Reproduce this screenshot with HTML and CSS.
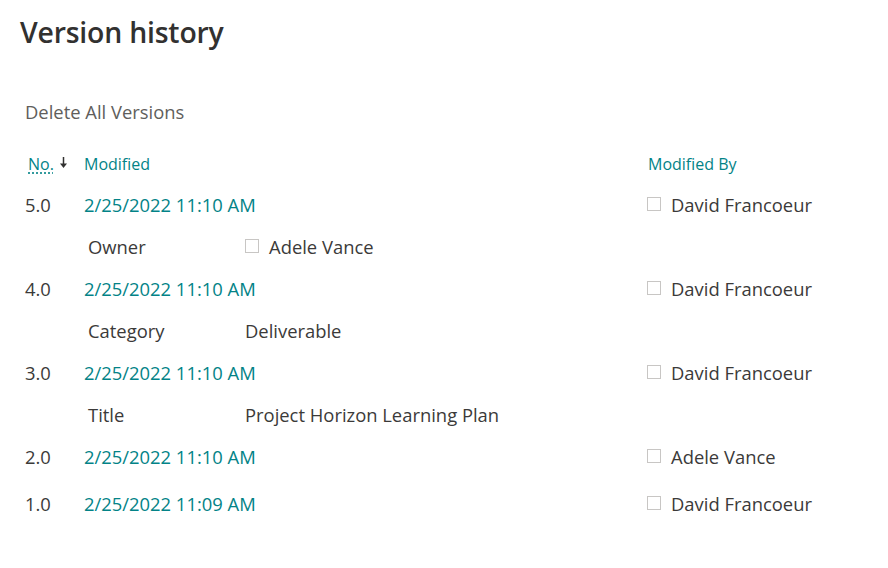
FILE: index.html
```html
<!DOCTYPE html>
<html lang="en">
<head>
<meta charset="utf-8">
<title>Version history</title>
<link rel="stylesheet" href="styles.css">
</head>
<body>
<main class="page">
  <h1 class="title">Version history</h1>
  <div class="actions"><span class="delete">Delete All Versions</span></div>
  <div class="table">
    <div class="row head">
      <div class="c-no"><abbr class="abbr" title="Number">No.</abbr><svg class="arrow" width="9" height="13" viewBox="0 0 9 13"><path d="M4.5 1 V10" fill="none" stroke="#323130" stroke-width="1.5"/><path d="M1 7.5 L4.5 12 L8 7.5 Z" fill="#323130"/></svg></div>
      <div class="c-mod">Modified</div>
      <div class="c-by">Modified By</div>
    </div>

    <div class="row ver">
      <div class="c-no">5.0</div>
      <div class="c-mod link">2/25/2022 11:10 AM</div>
      <div class="c-by"><span class="cb"></span>David Francoeur</div>
    </div>
    <div class="detail">
      <div class="d-label">Owner</div>
      <div class="d-value"><span class="cb"></span>Adele Vance</div>
    </div>

    <div class="row ver">
      <div class="c-no">4.0</div>
      <div class="c-mod link">2/25/2022 11:10 AM</div>
      <div class="c-by"><span class="cb"></span>David Francoeur</div>
    </div>
    <div class="detail">
      <div class="d-label">Category</div>
      <div class="d-value">Deliverable</div>
    </div>

    <div class="row ver">
      <div class="c-no">3.0</div>
      <div class="c-mod link">2/25/2022 11:10 AM</div>
      <div class="c-by"><span class="cb"></span>David Francoeur</div>
    </div>
    <div class="detail">
      <div class="d-label">Title</div>
      <div class="d-value">Project Horizon Learning Plan</div>
    </div>

    <div class="row ver">
      <div class="c-no">2.0</div>
      <div class="c-mod link">2/25/2022 11:10 AM</div>
      <div class="c-by"><span class="cb"></span>Adele Vance</div>
    </div>

    <div class="row ver spaced">
      <div class="c-no">1.0</div>
      <div class="c-mod link">2/25/2022 11:09 AM</div>
      <div class="c-by"><span class="cb"></span>David Francoeur</div>
    </div>
  </div>
</main>
</body>
</html>
```

FILE: styles.css
```css
html, body {
  margin: 0;
  padding: 0;
  background: #ffffff;
}

body {
  font-family: "Open Sans", "Noto Sans", "Liberation Sans", sans-serif;
  color: #3b3a39;
}

.page {
  padding: 12px 0 0 20px;
}

.title {
  margin: 0;
  font-size: 28.4px;
  line-height: 40px;
  font-weight: 600;
  color: #323130;
  letter-spacing: -0.2px;
}

.actions {
  margin-top: 47px;
  padding-left: 5px;
  height: 24px;
  display: flex;
  align-items: center;
}

.delete {
  font-size: 18.4px;
  color: #605e5c;
}

.table {
  margin-top: 22px;
  padding-left: 5px;
}

.row {
  display: grid;
  grid-template-columns: 59px 564px 1fr;
  align-items: center;
}

.head {
  height: 38px;
  font-size: 16px;
  color: #038387;
}

.head .c-no {
  display: flex;
  align-items: center;
  padding-left: 3px;
  gap: 5px;
}

.abbr {
  text-decoration: underline dotted;
  text-underline-offset: 3px;
  color: #038387;
}

.arrow {
  display: block;
  margin-top: -4px;
}

.ver {
  height: 42px;
  font-size: 18.4px;
}

.spaced {
  margin-top: 5px;
}

.link {
  color: #038387;
}

.c-by {
  display: flex;
  align-items: center;
}

.c-by .cb {
  margin-left: -1px;
}

.cb {
  display: inline-block;
  flex: none;
  width: 14px;
  height: 14px;
  border: 1px solid #c8c6c4;
  margin-right: 10px;
  box-sizing: border-box;
}

.detail {
  display: grid;
  grid-template-columns: 157px 1fr;
  align-items: center;
  height: 42px;
  padding-left: 63px;
  font-size: 18.4px;
  color: #3b3a39;
}

.d-value {
  display: flex;
  align-items: center;
}
```
